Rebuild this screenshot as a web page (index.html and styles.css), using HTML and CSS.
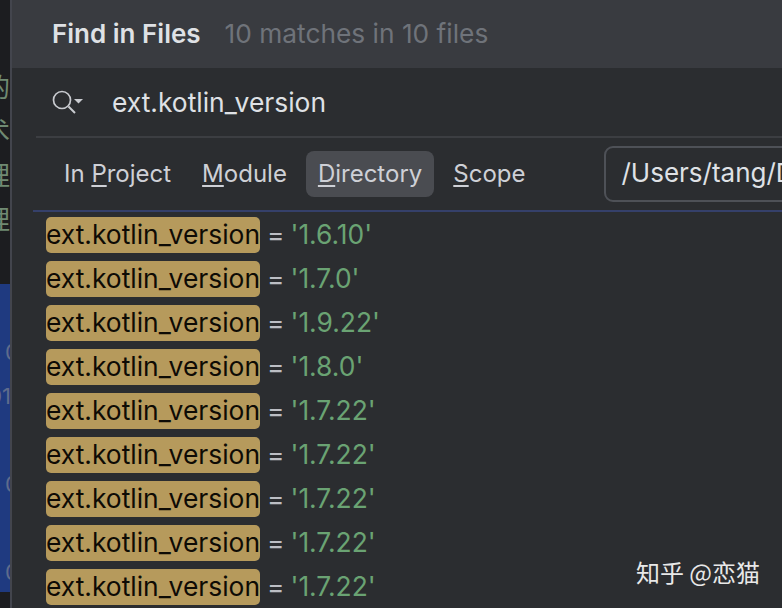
FILE: index.html
```html
<!DOCTYPE html>
<html lang="zh">
<head>
<meta charset="utf-8">
<title>Find in Files</title>
<link rel="stylesheet" href="styles.css">
</head>
<body>
<div class="app">
  <aside class="strip">
    <div class="strip-top">
      <span class="cjk">的</span>
      <span class="cjk">术</span>
      <span class="cjk">理</span>
      <span class="cjk">理</span>
    </div>
    <div class="strip-blue">
      <span class="blip">0</span>
      <span class="blip blip-wide">01</span>
      <span class="blip">0</span>
      <span class="blip">0</span>
    </div>
  </aside>
  <main class="dialog">
    <header class="title-bar">
      <h1 class="title">Find in Files</h1>
      <span class="count">10 matches in 10 files</span>
    </header>
    <section class="search-row">
      <svg class="search-icon" width="34" height="26" viewBox="0 0 34 26" aria-hidden="true">
        <circle cx="11" cy="10" r="8.500" fill="none" stroke="#c9cbd0" stroke-width="1.700"/>
        <path d="M17.500 16.500L24 23" fill="none" stroke="#c9cbd0" stroke-width="1.900"/>
        <path d="M23 9h9l-4.500 4.500z" fill="#c9cbd0"/>
      </svg>
      <span class="query">ext.kotlin_version</span>
    </section>
    <nav class="scope-row">
      <span class="tab">In <u>P</u>roject</span>
      <span class="tab"><u>M</u>odule</span>
      <span class="tab tab-active"><u>D</u>irectory</span>
      <span class="tab"><u>S</u>cope</span>
      <div class="path-field">/Users/tang/Desktop/projects</div>
    </nav>
    <ul class="results">
      <li class="result"><mark class="hit">ext.kotlin_version</mark><span class="eq">=</span><span class="str">'1.6.10'</span></li>
      <li class="result"><mark class="hit">ext.kotlin_version</mark><span class="eq">=</span><span class="str">'1.7.0'</span></li>
      <li class="result"><mark class="hit">ext.kotlin_version</mark><span class="eq">=</span><span class="str">'1.9.22'</span></li>
      <li class="result"><mark class="hit">ext.kotlin_version</mark><span class="eq">=</span><span class="str">'1.8.0'</span></li>
      <li class="result"><mark class="hit">ext.kotlin_version</mark><span class="eq">=</span><span class="str">'1.7.22'</span></li>
      <li class="result"><mark class="hit">ext.kotlin_version</mark><span class="eq">=</span><span class="str">'1.7.22'</span></li>
      <li class="result"><mark class="hit">ext.kotlin_version</mark><span class="eq">=</span><span class="str">'1.7.22'</span></li>
      <li class="result"><mark class="hit">ext.kotlin_version</mark><span class="eq">=</span><span class="str">'1.7.22'</span></li>
      <li class="result"><mark class="hit">ext.kotlin_version</mark><span class="eq">=</span><span class="str">'1.7.22'</span></li>
    </ul>
    <div class="watermark">知乎 @恋猫</div>
  </main>
</div>
</body>
</html>
```
FILE: styles.css
```css
* { box-sizing: border-box; }
html, body { margin: 0; height: 100%; overflow: hidden; background: #2b2d30; }
body { font-family: Inter, "Noto Sans CJK SC", sans-serif; }

.app { display: flex; width: 782px; height: 608px; }

.strip {
  flex: 0 0 10px;
  display: flex;
  flex-direction: column;
  overflow: hidden;
  background: #1c1d20;
}
.strip-top {
  flex: 0 0 284px;
  padding-top: 72px;
  display: flex;
  flex-direction: column;
  align-items: flex-end;
  gap: 16px;
}
.cjk {
  flex: 0 0 28px;
  font: 26px/28px "Noto Sans CJK SC", sans-serif;
  color: #6f8a72;
  white-space: nowrap;
}
.strip-blue {
  flex: 0 0 308px;
  background: #1f3a80;
  padding-top: 54px;
  display: flex;
  flex-direction: column;
  align-items: flex-end;
  gap: 60px;
}
.blip {
  flex: 0 0 28px;
  margin-right: -9px;
  font: 22px/28px Inter, sans-serif;
  color: #5f6b8c;
}
.blip-wide { margin-right: -1px; margin-top: -44px; flex-basis: 28px; }

.dialog {
  position: relative;
  flex: 1;
  min-width: 0;
  overflow: hidden;
  border-left: 2px solid #43454d;
  background: #2b2d30;
}

.title-bar {
  height: 68px;
  padding: 0 0 2px 40px;
  display: flex;
  align-items: center;
  gap: 24px;
  background: #393b40;
}
.title { margin: 0; font-size: 26px; font-weight: 600; color: #dfe1e5; }
.count { font-size: 26.300px; color: #6f737a; white-space: nowrap; }

.search-row {
  height: 70px;
  margin-left: 24px;
  padding: 1px 0 0 15px;
  display: flex;
  align-items: center;
  gap: 27px;
  border-bottom: 2px solid #3c3e42;
}
.search-icon { flex: none; }
.query { margin-bottom: 2px; font-size: 26.400px; color: #dfe1e5; white-space: nowrap; }

.scope-row {
  height: 74px;
  margin-left: 21px;
  padding-left: 19px;
  display: flex;
  align-items: center;
  gap: 7px;
  border-bottom: 2px solid #35406a;
  white-space: nowrap;
}
.tab {
  padding: 0 12px;
  height: 46px;
  line-height: 46px;
  border-radius: 8px;
  font-size: 24px;
  color: #ced0d6;
}
.tab u { text-underline-offset: 3px; text-decoration-thickness: 1.500px; }
.tab-active { background: #4a4c51; }
.path-field {
  flex: none;
  width: 400px;
  height: 56px;
  margin-left: 60px;
  padding-left: 15px;
  line-height: 50px;
  border: 2px solid #4e5157;
  border-radius: 9px;
  font-size: 26px;
  color: #dfe1e5;
}

.results { list-style: none; margin: 0; padding: 5px 0 0 34px; }
.result {
  height: 44px;
  display: flex;
  align-items: flex-start;
  font-size: 26.400px;
  line-height: 34px;
  white-space: nowrap;
}
.hit {
  height: 36px;
  padding: 0;
  border-radius: 5px;
  background: #b69a5c;
  color: #0e0b05;
}
.eq { margin-left: 7px; color: #bcbec4; }
.str { margin-left: 6px; color: #6aa373; }

.watermark {
  position: absolute;
  right: 22px;
  bottom: 22px;
  font: 24px/28px "Noto Sans CJK SC", sans-serif;
  color: #e8e8e8;
  white-space: nowrap;
}
```
